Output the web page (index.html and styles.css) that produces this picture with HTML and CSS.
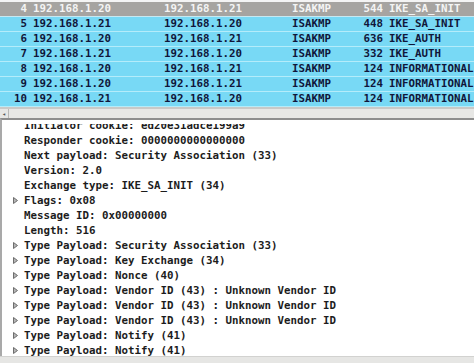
FILE: index.html
```html
<!DOCTYPE html>
<html>
<head>
<meta charset="utf-8">
<link rel="stylesheet" href="styles.css">
</head>
<body>
<div class="packets">
  <div class="row sel"><span class="no">4</span><span class="src">192.168.1.20</span><span class="dst">192.168.1.21</span><span class="proto">ISAKMP</span><span class="len">544</span><span class="info">IKE_SA_INIT</span></div>
  <div class="row"><span class="no">5</span><span class="src">192.168.1.21</span><span class="dst">192.168.1.20</span><span class="proto">ISAKMP</span><span class="len">448</span><span class="info">IKE_SA_INIT</span></div>
  <div class="row"><span class="no">6</span><span class="src">192.168.1.20</span><span class="dst">192.168.1.21</span><span class="proto">ISAKMP</span><span class="len">636</span><span class="info">IKE_AUTH</span></div>
  <div class="row"><span class="no">7</span><span class="src">192.168.1.21</span><span class="dst">192.168.1.20</span><span class="proto">ISAKMP</span><span class="len">332</span><span class="info">IKE_AUTH</span></div>
  <div class="row"><span class="no">8</span><span class="src">192.168.1.20</span><span class="dst">192.168.1.21</span><span class="proto">ISAKMP</span><span class="len">124</span><span class="info">INFORMATIONAL</span></div>
  <div class="row"><span class="no">9</span><span class="src">192.168.1.20</span><span class="dst">192.168.1.21</span><span class="proto">ISAKMP</span><span class="len">124</span><span class="info">INFORMATIONAL</span></div>
  <div class="row"><span class="no">10</span><span class="src">192.168.1.21</span><span class="dst">192.168.1.20</span><span class="proto">ISAKMP</span><span class="len">124</span><span class="info">INFORMATIONAL</span></div>
</div>
<div class="hscroll"><span class="arrow">&#9666;</span></div>
<div class="details">
  <div class="viewport">
    <div class="lines">
      <div class="line"><span class="tw"></span>Initiator cookie: ed20e31adce199a9</div>
      <div class="line"><span class="tw"></span>Responder cookie: 0000000000000000</div>
      <div class="line"><span class="tw"></span>Next payload: Security Association (33)</div>
      <div class="line"><span class="tw"></span>Version: 2.0</div>
      <div class="line"><span class="tw"></span>Exchange type: IKE_SA_INIT (34)</div>
      <div class="line"><span class="tw"><svg viewBox="0 0 5 7" width="5" height="7"><polygon points="0.5,0.5 4.5,3.5 0.5,6.5" fill="#b5b5b5" stroke="#6e6e6e" stroke-width="1"/></svg></span>Flags: 0x08</div>
      <div class="line"><span class="tw"></span>Message ID: 0x00000000</div>
      <div class="line"><span class="tw"></span>Length: 516</div>
      <div class="line"><span class="tw"><svg viewBox="0 0 5 7" width="5" height="7"><polygon points="0.5,0.5 4.5,3.5 0.5,6.5" fill="#b5b5b5" stroke="#6e6e6e" stroke-width="1"/></svg></span>Type Payload: Security Association (33)</div>
      <div class="line"><span class="tw"><svg viewBox="0 0 5 7" width="5" height="7"><polygon points="0.5,0.5 4.5,3.5 0.5,6.5" fill="#b5b5b5" stroke="#6e6e6e" stroke-width="1"/></svg></span>Type Payload: Key Exchange (34)</div>
      <div class="line"><span class="tw"><svg viewBox="0 0 5 7" width="5" height="7"><polygon points="0.5,0.5 4.5,3.5 0.5,6.5" fill="#b5b5b5" stroke="#6e6e6e" stroke-width="1"/></svg></span>Type Payload: Nonce (40)</div>
      <div class="line"><span class="tw"><svg viewBox="0 0 5 7" width="5" height="7"><polygon points="0.5,0.5 4.5,3.5 0.5,6.5" fill="#b5b5b5" stroke="#6e6e6e" stroke-width="1"/></svg></span>Type Payload: Vendor ID (43) : Unknown Vendor ID</div>
      <div class="line"><span class="tw"><svg viewBox="0 0 5 7" width="5" height="7"><polygon points="0.5,0.5 4.5,3.5 0.5,6.5" fill="#b5b5b5" stroke="#6e6e6e" stroke-width="1"/></svg></span>Type Payload: Vendor ID (43) : Unknown Vendor ID</div>
      <div class="line"><span class="tw"><svg viewBox="0 0 5 7" width="5" height="7"><polygon points="0.5,0.5 4.5,3.5 0.5,6.5" fill="#b5b5b5" stroke="#6e6e6e" stroke-width="1"/></svg></span>Type Payload: Vendor ID (43) : Unknown Vendor ID</div>
      <div class="line"><span class="tw"><svg viewBox="0 0 5 7" width="5" height="7"><polygon points="0.5,0.5 4.5,3.5 0.5,6.5" fill="#b5b5b5" stroke="#6e6e6e" stroke-width="1"/></svg></span>Type Payload: Notify (41)</div>
      <div class="line"><span class="tw"><svg viewBox="0 0 5 7" width="5" height="7"><polygon points="0.5,0.5 4.5,3.5 0.5,6.5" fill="#b5b5b5" stroke="#6e6e6e" stroke-width="1"/></svg></span>Type Payload: Notify (41)</div>
    </div>
  </div>
</div>
<div class="statusbar"></div>
</body>
</html>
```

FILE: styles.css
```css
html, body {
  margin: 0;
  padding: 0;
  background: #ffffff;
  width: 474px;
  height: 363px;
  overflow: hidden;
  font-family: "DejaVu Sans Mono", "Liberation Mono", monospace;
  font-size: 10.8px;
  font-weight: bold;
}

.packets {
  padding-top: 2px;
  background: #f4f4f4;
}

.row {
  display: grid;
  grid-template-columns: 33px 131px 128px 71px 20px 1fr;
  height: 14px;
  line-height: 14px;
  border-bottom: 1px solid #b4ecfa;
  background: #78d9f5;
  color: #10163a;
  white-space: nowrap;
  overflow: hidden;
}

.row.sel {
  background: #a6a4a1;
  color: #f4f4f4;
  border-bottom-color: #c8e9f2;
}

.no {
  text-align: right;
  padding-right: 6px;
}

.len {
  text-align: right;
}

.info {
  padding-left: 6px;
}

.hscroll {
  height: 9px;
  border-top: 2px solid #c9c9c7;
  background: #e7e7e5;
  display: flex;
  align-items: center;
}

.arrow {
  width: 8px;
  height: 9px;
  border-right: 1px solid #b8b8b6;
  font-size: 6px;
  line-height: 9px;
  text-align: center;
  color: #555;
  font-weight: normal;
}

.details {
  border-top: 2px solid #8d8d8d;
  border-left: 2px solid #a9a9a9;
  padding-top: 4px;
  background: #ffffff;
}

.viewport {
  height: 232px;
  overflow: hidden;
}

.lines {
  margin-top: -6px;
  color: #1c1c1c;
}

.line {
  display: flex;
  align-items: center;
  height: 15px;
  line-height: 15px;
  white-space: nowrap;
}

.tw {
  width: 22px;
  display: flex;
  justify-content: flex-end;
  padding-right: 6px;
  box-sizing: border-box;
  height: 15px;
  align-items: center;
}

.tw svg {
  display: block;
}

.statusbar {
  height: 7px;
  border-top: 1px solid #d2d2d0;
  background: #e6e6e4;
}
```
